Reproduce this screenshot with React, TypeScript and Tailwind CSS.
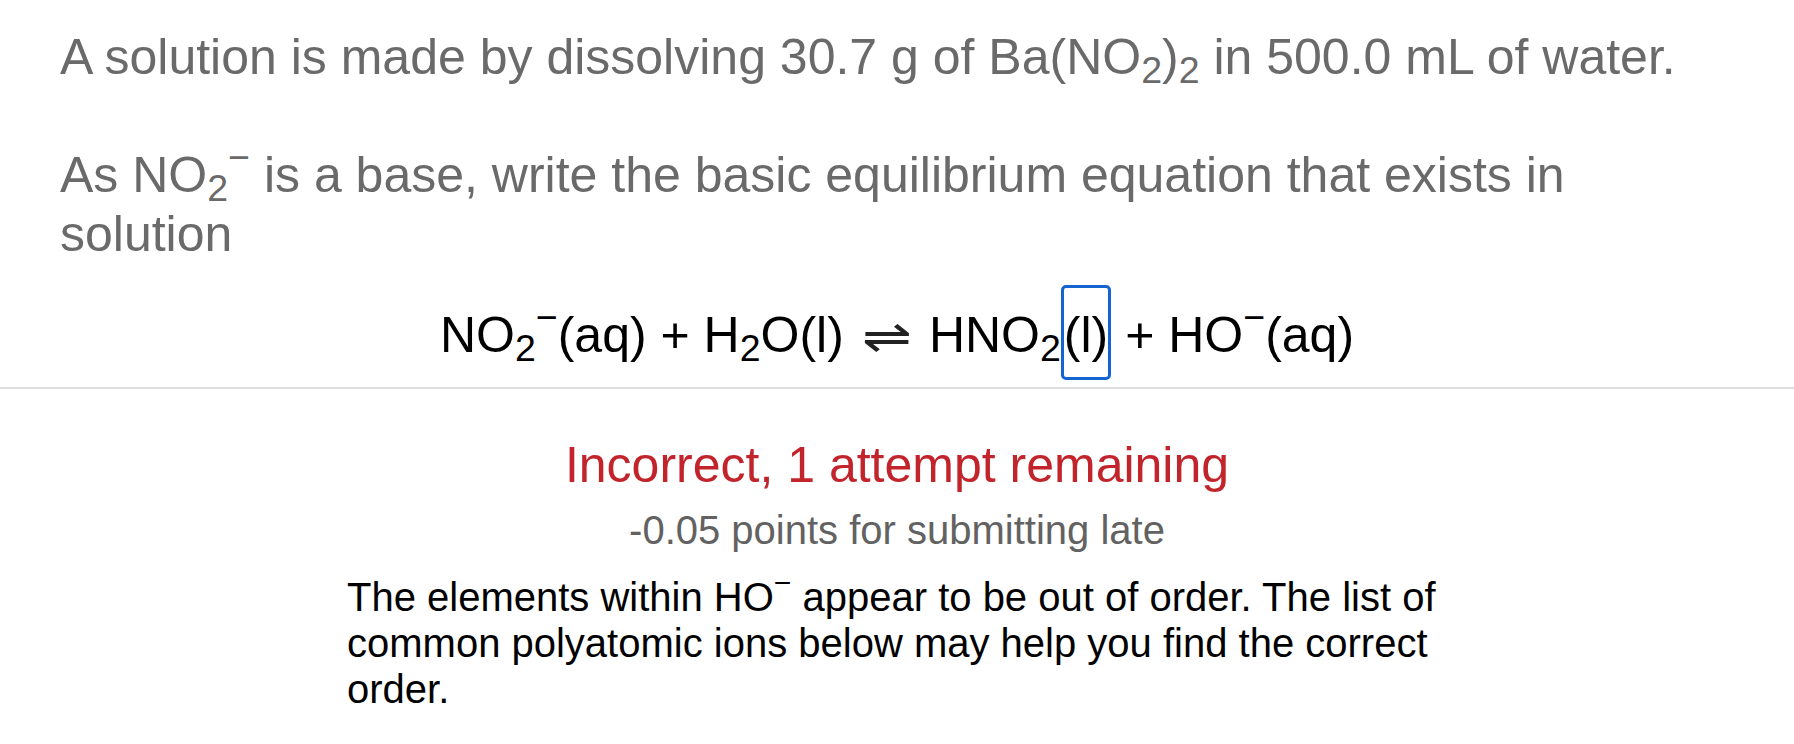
function Charge() {
  return <sup className="top-[-0.6em]">−</sup>
}

function AnswerBox({ children }: { children: string }) {
  return (
    <span className="inline-block rounded-[5px] border-[3px] border-[#1565d0] pt-[18px] pb-[12px] leading-[59px]">
      {children}
    </span>
  )
}

export default function App() {
  return (
    <div className="min-h-[744px] w-full bg-white font-['Liberation_Sans',Arial,sans-serif]">
      <div className="pt-[28px] pl-[60px] text-[50px] leading-[59px] text-[#6a6a6a]">
        <p className="mb-[59px]">
          A solution is made by dissolving 30.7 g of Ba(NO<sub>2</sub>)<sub>2</sub> in 500.0 mL of water.
        </p>
        <p className="w-[1580px]">
          As NO<sub>2</sub>
          <Charge /> is a base, write the basic equilibrium equation that exists in solution
        </p>
      </div>

      <div className="mt-[21px] text-center text-[50px] leading-[59px] text-black">
        NO<sub>2</sub>
        <Charge />
        (aq) + H<sub>2</sub>O(l)
        <span className="mx-[24px] inline-block scale-x-[1.35] font-['DejaVu_Sans'] text-[44px] font-extralight text-[#222]">
          ⇌
        </span>
        HNO<sub>2</sub>
        <AnswerBox>(l)</AnswerBox> + HO
        <Charge />
        (aq)
      </div>

      <div className="mt-[7px] border-t-2 border-[#dedede]" />

      <div className="pt-[47px] text-center">
        <p className="text-[50px] leading-[59px] text-[#c2242c]">Incorrect, 1 attempt remaining</p>
        <p className="mt-[12px] text-[40px] leading-[46px] text-[#626262]">-0.05 points for submitting late</p>
        <p className="mx-auto mt-[21px] w-[1100px] text-left text-[40px] leading-[46px] text-black">
          The elements within HO
          <Charge /> appear to be out of order. The list of common polyatomic ions below may help you find the
          correct order.
        </p>
      </div>
    </div>
  )
}
